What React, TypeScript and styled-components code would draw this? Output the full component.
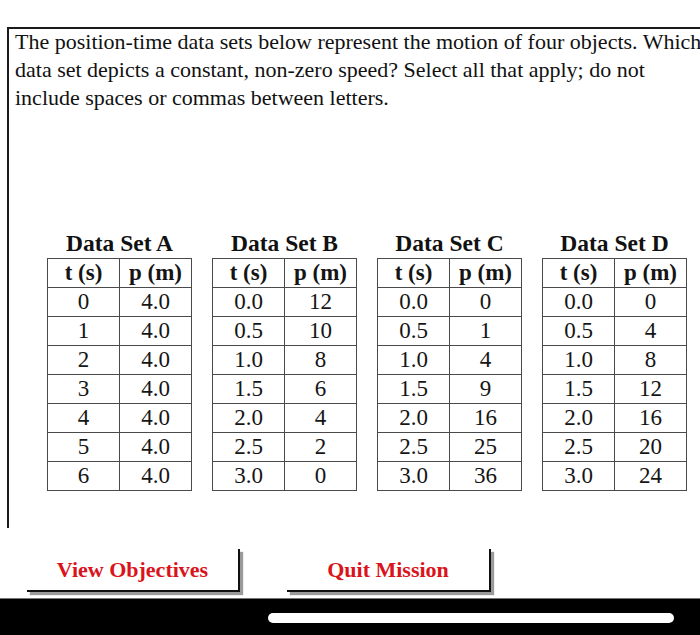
import React from "react";
import styled, { createGlobalStyle } from "styled-components";

const Global = createGlobalStyle`
  html, body { margin: 0; padding: 0; background: #fff; }
  body { font-family: "Liberation Serif", "Times New Roman", serif; color: #111; }
`;

const Page = styled.div`
  width: 700px;
  height: 635px;
  overflow: hidden;
  display: flex;
  flex-direction: column;
  background: #fff;
`;

const Panel = styled.section`
  margin-top: 27px;
  margin-left: 7px;
  height: 499px;
  width: 720px;
  border-top: 2px solid #1a1a1a;
  border-left: 2px solid #1a1a1a;
  display: flex;
  flex-direction: column;
  flex-shrink: 0;
`;

const Question = styled.p`
  margin: -1px 0 0 0;
  padding-left: 6px;
  font-size: 22px;
  line-height: 28px;
  white-space: nowrap;
  color: #111;
`;

const TablesRow = styled.div`
  margin-top: 119px;
  padding-left: 38px;
  display: flex;
  gap: 20px;
`;

const DataBlock = styled.div`
  width: 145px;
  display: flex;
  flex-direction: column;
`;

const Caption = styled.div`
  font-weight: bold;
  font-size: 23.5px;
  line-height: 24px;
  text-align: center;
  margin-bottom: 3px;
  color: #111;
`;

const Table = styled.table`
  border-collapse: collapse;
  width: 145px;
  table-layout: fixed;
  border: 1px solid #666;
`;

const Cell = styled.td<{ $head?: boolean }>`
  border: 1px solid #4a4a4a;
  height: 28px;
  padding: 0;
  text-align: center;
  font-size: 23px;
  line-height: 26px;
  font-weight: ${(p) => (p.$head ? "bold" : "normal")};
  color: #151515;
`;

const ButtonRow = styled.div`
  margin-top: 21px;
  padding-left: 27px;
  display: flex;
  gap: 47px;
  flex-shrink: 0;
`;

const Button = styled.button<{ $w: number }>`
  width: ${(p) => p.$w}px;
  height: 43px;
  background: #fff;
  border: none;
  border-right: 2px solid #111;
  border-bottom: 2px solid #111;
  box-shadow: 3px 3px 1px #9a9a9a;
  padding: 0;
  font-family: "Liberation Serif", "Times New Roman", serif;
  font-weight: bold;
  font-size: 22px;
  color: #d9141b;
  cursor: pointer;
`;

const BottomBar = styled.div`
  margin-top: 6px;
  height: 37px;
  background: #000;
  border-top: 1px solid #777;
  display: flex;
  align-items: center;
  padding-left: 268px;
  flex-shrink: 0;
`;

const Pill = styled.div`
  width: 406px;
  height: 10px;
  border-radius: 5px;
  background: #fff;
`;

type DataSet = { name: string; rows: [string, string][] };

const sets: DataSet[] = [
  { name: "Data Set A", rows: [["0", "4.0"], ["1", "4.0"], ["2", "4.0"], ["3", "4.0"], ["4", "4.0"], ["5", "4.0"], ["6", "4.0"]] },
  { name: "Data Set B", rows: [["0.0", "12"], ["0.5", "10"], ["1.0", "8"], ["1.5", "6"], ["2.0", "4"], ["2.5", "2"], ["3.0", "0"]] },
  { name: "Data Set C", rows: [["0.0", "0"], ["0.5", "1"], ["1.0", "4"], ["1.5", "9"], ["2.0", "16"], ["2.5", "25"], ["3.0", "36"]] },
  { name: "Data Set D", rows: [["0.0", "0"], ["0.5", "4"], ["1.0", "8"], ["1.5", "12"], ["2.0", "16"], ["2.5", "20"], ["3.0", "24"]] },
];

export default function App() {
  return (
    <Page>
      <Global />
      <Panel>
        <Question>
          The position-time data sets below represent the motion of four objects. Which
          <br />
          data set depicts a constant, non-zero speed? Select all that apply; do not
          <br />
          include spaces or commas between letters.
        </Question>
        <TablesRow>
          {sets.map((s) => (
            <DataBlock key={s.name}>
              <Caption>{s.name}</Caption>
              <Table>
                <tbody>
                  <tr>
                    <Cell $head>t (s)</Cell>
                    <Cell $head>p (m)</Cell>
                  </tr>
                  {s.rows.map(([t, p], i) => (
                    <tr key={i}>
                      <Cell>{t}</Cell>
                      <Cell>{p}</Cell>
                    </tr>
                  ))}
                </tbody>
              </Table>
            </DataBlock>
          ))}
        </TablesRow>
      </Panel>
      <ButtonRow>
        <Button $w={213}>View Objectives</Button>
        <Button $w={204}>Quit Mission</Button>
      </ButtonRow>
      <BottomBar>
        <Pill />
      </BottomBar>
    </Page>
  );
}
